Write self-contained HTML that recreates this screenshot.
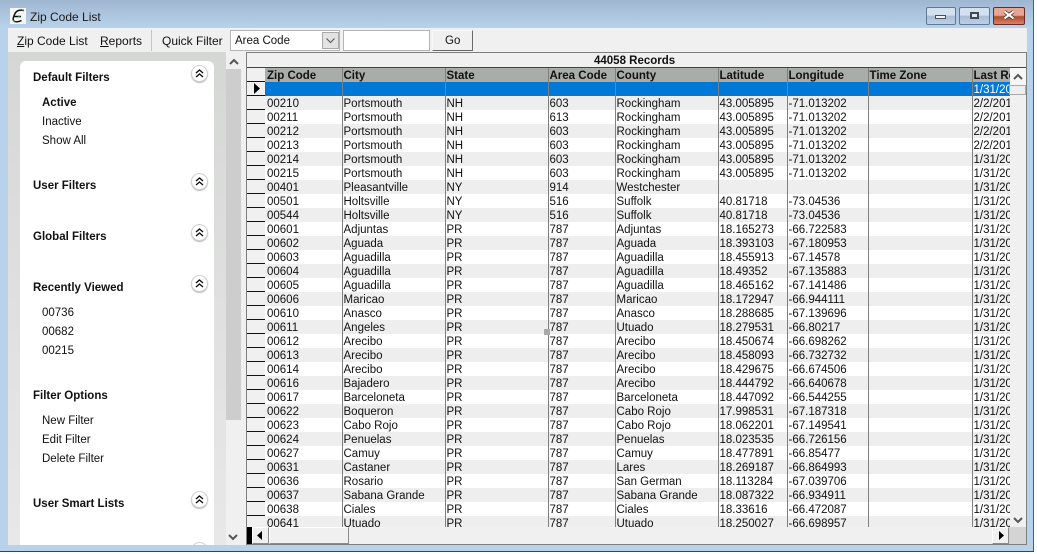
<!DOCTYPE html>
<html><head><meta charset="utf-8"><style>
html,body{margin:0;padding:0;background:#fff}
#w{position:relative;width:1037px;height:554px;overflow:hidden;background:#fff;font:11.5px "Liberation Sans",sans-serif;color:#111}
#w div,#w span.a,#w svg{position:absolute}
.t{white-space:nowrap;line-height:14px}
.b{font-weight:bold}
table{border-collapse:collapse;table-layout:fixed;position:absolute;left:265px;top:82px;width:745px}
td{height:14px;padding:2px 0 0 1px;border:0;border-right:1px solid #7f7f7f;white-space:nowrap;overflow:hidden;line-height:12px;font-size:11.5px;color:#111;box-sizing:border-box}
td:first-child,th:first-child{padding-left:2px}
tr{height:14px}
tr.s{background:#0078d7!important}
tr.s td{color:#fff}
td:last-child{border-right:0}
th{height:14px;padding:2px 0 0 1px;text-align:left;background:#a9adaa;border-right:1px solid #7f7f7f;font-size:11.5px;line-height:12px;white-space:nowrap;overflow:hidden;box-sizing:border-box;color:#111}
th:last-child{border-right:0}
.c{width:15px;height:15px;border-radius:50%;background:#fff;border:1px solid #d0d0d0;box-shadow:0 1px 1px #bbb}
.sl{left:247px;width:18px;height:1px;background:#111}
</style></head><body><div id="w">
<div style="left:0;top:0;width:1034px;height:552px;background:linear-gradient(#9fb6d1,#b9d2ec 28px,#b9d2ec);box-sizing:border-box"></div>
<div style="left:1033px;top:0;width:1px;height:552px;background:#4a5f72"></div>
<div style="left:0;top:551px;width:1034px;height:1px;background:#2b4a55"></div>

<svg style="left:10px;top:8px" width="16" height="16" viewBox="0 0 16 16"><rect width="16" height="16" fill="#f6f6f6"/><path d="M14 2.500C10 1.500 6.500 2.500 5 5.500S2.500 11 3.500 12.500 8 14.500 11.500 12.500M4 8.500h7" fill="none" stroke="#111" stroke-width="1.500"/><path d="M12 2l2 .5M3 12l2 2M8 8.500h2" stroke="#2f7a45" stroke-width="1.300"/></svg>
<div class="t" style="left:30px;top:10px;font-size:12px;color:#1a1a1a">Zip Code List</div>

<div style="left:926px;top:7px;width:30px;height:18px;border:1px solid #5f7a96;border-radius:2px;box-sizing:border-box;background:linear-gradient(#d3e0ef 45%,#a9bed6 50%,#bcd0e6)"></div>
<div style="left:935px;top:15px;width:11px;height:4px;background:#f4f4f4;border:1px solid #47505b;box-sizing:border-box"></div>
<div style="left:959px;top:7px;width:31px;height:18px;border:1px solid #5f7a96;border-radius:2px;box-sizing:border-box;background:linear-gradient(#d3e0ef 45%,#a9bed6 50%,#bcd0e6)"></div>
<div style="left:970px;top:12px;width:9px;height:7px;background:#dfe8f1;border:2px solid #3f4853;box-sizing:border-box"></div>
<div style="left:993px;top:7px;width:32px;height:18px;border:1px solid #6b2a2a;border-radius:2px;box-sizing:border-box;background:linear-gradient(#e8a595 45%,#a8502a 55%,#d9836c)"></div>
<svg style="left:1002px;top:10px" width="14" height="10" viewBox="0 0 14 10"><path d="M2.500 1.500l9 7M11.500 1.500l-9 7" stroke="#3a1d1d" stroke-width="3.600"/><path d="M2.500 1.500l9 7M11.500 1.500l-9 7" stroke="#fff" stroke-width="2.200"/></svg>

<div style="left:8px;top:28px;width:1019px;height:517px;background:#f0f0f0"></div>
<div class="t" style="left:17px;top:34px;font-size:12px"><u>Z</u>ip Code List</div>
<div class="t" style="left:100px;top:34px;font-size:12px"><u>R</u>eports</div>
<div style="left:151px;top:30px;width:1px;height:21px;background:#c4c4c4"></div>
<div class="t" style="left:162px;top:34px;font-size:12px">Quick Filter</div>
<div style="left:230px;top:30px;width:110px;height:21px;background:#fff;border:1px solid #b4b4b4;box-sizing:border-box"></div>
<div class="t" style="left:235px;top:34px;font-size:11.5px">Area Code</div>
<div style="left:322px;top:32px;width:17px;height:17px;background:#e3e3e3;border:1px solid #a8a8a8;box-sizing:border-box"></div>
<svg style="left:325px;top:37px" width="11" height="8" viewBox="0 0 11 8"><path d="M1.500 1.500l4 4 4-4" fill="none" stroke="#555" stroke-width="1.100"/></svg>
<div style="left:343px;top:30px;width:87px;height:21px;background:#fff;border:1px solid #b4b4b4;box-sizing:border-box"></div>
<div style="left:432px;top:30px;width:41px;height:21px;background:#f0f0f0;border:1px solid;border-color:#f8f8f8 #6a6a6a #6a6a6a #f8f8f8;box-sizing:border-box"></div>
<div class="t" style="left:445px;top:34px;font-size:11.5px">Go</div>

<div style="left:8px;top:52px;width:218px;height:493px;background:linear-gradient(#d5d7d5,#e8e8e8)"></div>
<div style="left:20px;top:61px;width:194px;height:484px;background:#fff;border-radius:6px 6px 0 0"></div>
<div style="left:226px;top:52px;width:20px;height:493px;background:#f0f0f0"></div>
<div style="left:226px;top:69px;width:15px;height:351px;background:#cdcdcd"></div>
<svg style="left:228px;top:58px" width="12" height="8" viewBox="0 0 12 8"><path d="M2 6l4-4 4 4" fill="none" stroke="#555" stroke-width="2"/></svg>
<svg style="left:227px;top:533px" width="12" height="8" viewBox="0 0 12 8"><path d="M2 2l4 4 4-4" fill="none" stroke="#555" stroke-width="2"/></svg>

<div class="t b" style="left:33px;top:71px">Default Filters</div>
<div class="t b" style="left:42px;top:96px">Active</div>
<div class="t" style="left:42px;top:115px">Inactive</div>
<div class="t" style="left:42px;top:134px">Show All</div>
<div class="t b" style="left:33px;top:179px">User Filters</div>
<div class="t b" style="left:33px;top:230px">Global Filters</div>
<div class="t b" style="left:33px;top:281px">Recently Viewed</div>
<div class="t" style="left:42px;top:306px">00736</div>
<div class="t" style="left:42px;top:325px">00682</div>
<div class="t" style="left:42px;top:344px">00215</div>
<div class="t b" style="left:33px;top:389px">Filter Options</div>
<div class="t" style="left:42px;top:414px">New Filter</div>
<div class="t" style="left:42px;top:433px">Edit Filter</div>
<div class="t" style="left:42px;top:452px">Delete Filter</div>
<div class="t b" style="left:33px;top:497px">User Smart Lists</div>

<div class="c" style="left:191px;top:65px"></div><svg style="left:192px;top:66px" width="15" height="15" viewBox="0 0 15 15"><path d="M4 7l3.500-3 3.500 3M4 11l3.500-3 3.500 3" fill="none" stroke="#111" stroke-width="1.400"/></svg>
<div class="c" style="left:191px;top:173px"></div><svg style="left:192px;top:174px" width="15" height="15" viewBox="0 0 15 15"><path d="M4 7l3.500-3 3.500 3M4 11l3.500-3 3.500 3" fill="none" stroke="#111" stroke-width="1.400"/></svg>
<div class="c" style="left:191px;top:224px"></div><svg style="left:192px;top:225px" width="15" height="15" viewBox="0 0 15 15"><path d="M4 7l3.500-3 3.500 3M4 11l3.500-3 3.500 3" fill="none" stroke="#111" stroke-width="1.400"/></svg>
<div class="c" style="left:191px;top:275px"></div><svg style="left:192px;top:276px" width="15" height="15" viewBox="0 0 15 15"><path d="M4 7l3.500-3 3.500 3M4 11l3.500-3 3.500 3" fill="none" stroke="#111" stroke-width="1.400"/></svg>
<div class="c" style="left:191px;top:491px"></div><svg style="left:192px;top:492px" width="15" height="15" viewBox="0 0 15 15"><path d="M4 7l3.500-3 3.500 3M4 11l3.500-3 3.500 3" fill="none" stroke="#111" stroke-width="1.400"/></svg>
<div style="left:185px;top:535px;width:29px;height:10px;overflow:hidden"><div class="c" style="left:6px;top:7px"></div></div>
<div style="left:0;top:545px;width:1027px;height:6px;background:#b9d2ec"></div>
<div style="left:0;top:52px;width:8px;height:499px;background:#b9d2ec"></div>

<div style="left:246px;top:52px;width:781px;height:493px;background:#f0f0f0;border:1px solid #7f7f7f;box-sizing:border-box"></div>
<div class="t b" style="left:594px;top:54px">44058 Records</div>
<div style="left:247px;top:67px;width:779px;height:1px;background:#444"></div>
<div style="left:247px;top:68px;width:18px;height:459px;background:#f0f0f0"></div>
<div class="sl" style="top:81px"></div>
<div class="sl" style="top:95px"></div>
<div class="sl" style="top:109px"></div>
<div class="sl" style="top:123px"></div>
<div class="sl" style="top:137px"></div>
<div class="sl" style="top:151px"></div>
<div class="sl" style="top:165px"></div>
<div class="sl" style="top:179px"></div>
<div class="sl" style="top:193px"></div>
<div class="sl" style="top:207px"></div>
<div class="sl" style="top:221px"></div>
<div class="sl" style="top:235px"></div>
<div class="sl" style="top:249px"></div>
<div class="sl" style="top:263px"></div>
<div class="sl" style="top:277px"></div>
<div class="sl" style="top:291px"></div>
<div class="sl" style="top:305px"></div>
<div class="sl" style="top:319px"></div>
<div class="sl" style="top:333px"></div>
<div class="sl" style="top:347px"></div>
<div class="sl" style="top:361px"></div>
<div class="sl" style="top:375px"></div>
<div class="sl" style="top:389px"></div>
<div class="sl" style="top:403px"></div>
<div class="sl" style="top:417px"></div>
<div class="sl" style="top:431px"></div>
<div class="sl" style="top:445px"></div>
<div class="sl" style="top:459px"></div>
<div class="sl" style="top:473px"></div>
<div class="sl" style="top:487px"></div>
<div class="sl" style="top:501px"></div>
<div class="sl" style="top:515px"></div>
<div style="left:265px;top:68px;width:1px;height:459px;background:#7f7f7f"></div>
<svg style="left:253px;top:82px" width="9" height="13" viewBox="0 0 9 13"><path d="M1 1l6 5.500-6 5.500z" fill="#000"/></svg>

<div style="left:265px;top:68px;width:745px;height:459px;overflow:hidden">
<table style="left:0;top:0">
<colgroup><col style="width:77px"><col style="width:103px"><col style="width:103px"><col style="width:67px"><col style="width:103px"><col style="width:69px"><col style="width:81px"><col style="width:104px"><col style="width:38px"></colgroup>
<tr style="background:#a9adaa"><th>Zip Code</th><th>City</th><th>State</th><th>Area Code</th><th>County</th><th>Latitude</th><th>Longitude</th><th>Time Zone</th><th>Last Re</th></tr>
<tr class="s"><td></td><td></td><td></td><td></td><td></td><td></td><td></td><td></td><td>1/31/2012</td></tr>
<tr style="background:#eee"><td>00210</td><td>Portsmouth</td><td>NH</td><td>603</td><td>Rockingham</td><td>43.005895</td><td>-71.013202</td><td></td><td>2/2/2012</td></tr>
<tr style="background:#fff"><td>00211</td><td>Portsmouth</td><td>NH</td><td>613</td><td>Rockingham</td><td>43.005895</td><td>-71.013202</td><td></td><td>2/2/2012</td></tr>
<tr style="background:#eee"><td>00212</td><td>Portsmouth</td><td>NH</td><td>603</td><td>Rockingham</td><td>43.005895</td><td>-71.013202</td><td></td><td>2/2/2012</td></tr>
<tr style="background:#fff"><td>00213</td><td>Portsmouth</td><td>NH</td><td>603</td><td>Rockingham</td><td>43.005895</td><td>-71.013202</td><td></td><td>2/2/2012</td></tr>
<tr style="background:#eee"><td>00214</td><td>Portsmouth</td><td>NH</td><td>603</td><td>Rockingham</td><td>43.005895</td><td>-71.013202</td><td></td><td>1/31/2012</td></tr>
<tr style="background:#fff"><td>00215</td><td>Portsmouth</td><td>NH</td><td>603</td><td>Rockingham</td><td>43.005895</td><td>-71.013202</td><td></td><td>1/31/2012</td></tr>
<tr style="background:#eee"><td>00401</td><td>Pleasantville</td><td>NY</td><td>914</td><td>Westchester</td><td></td><td></td><td></td><td>1/31/2012</td></tr>
<tr style="background:#fff"><td>00501</td><td>Holtsville</td><td>NY</td><td>516</td><td>Suffolk</td><td>40.81718</td><td>-73.04536</td><td></td><td>1/31/2012</td></tr>
<tr style="background:#eee"><td>00544</td><td>Holtsville</td><td>NY</td><td>516</td><td>Suffolk</td><td>40.81718</td><td>-73.04536</td><td></td><td>1/31/2012</td></tr>
<tr style="background:#fff"><td>00601</td><td>Adjuntas</td><td>PR</td><td>787</td><td>Adjuntas</td><td>18.165273</td><td>-66.722583</td><td></td><td>1/31/2012</td></tr>
<tr style="background:#eee"><td>00602</td><td>Aguada</td><td>PR</td><td>787</td><td>Aguada</td><td>18.393103</td><td>-67.180953</td><td></td><td>1/31/2012</td></tr>
<tr style="background:#fff"><td>00603</td><td>Aguadilla</td><td>PR</td><td>787</td><td>Aguadilla</td><td>18.455913</td><td>-67.14578</td><td></td><td>1/31/2012</td></tr>
<tr style="background:#eee"><td>00604</td><td>Aguadilla</td><td>PR</td><td>787</td><td>Aguadilla</td><td>18.49352</td><td>-67.135883</td><td></td><td>1/31/2012</td></tr>
<tr style="background:#fff"><td>00605</td><td>Aguadilla</td><td>PR</td><td>787</td><td>Aguadilla</td><td>18.465162</td><td>-67.141486</td><td></td><td>1/31/2012</td></tr>
<tr style="background:#eee"><td>00606</td><td>Maricao</td><td>PR</td><td>787</td><td>Maricao</td><td>18.172947</td><td>-66.944111</td><td></td><td>1/31/2012</td></tr>
<tr style="background:#fff"><td>00610</td><td>Anasco</td><td>PR</td><td>787</td><td>Anasco</td><td>18.288685</td><td>-67.139696</td><td></td><td>1/31/2012</td></tr>
<tr style="background:#eee"><td>00611</td><td>Angeles</td><td>PR</td><td>787</td><td>Utuado</td><td>18.279531</td><td>-66.80217</td><td></td><td>1/31/2012</td></tr>
<tr style="background:#fff"><td>00612</td><td>Arecibo</td><td>PR</td><td>787</td><td>Arecibo</td><td>18.450674</td><td>-66.698262</td><td></td><td>1/31/2012</td></tr>
<tr style="background:#eee"><td>00613</td><td>Arecibo</td><td>PR</td><td>787</td><td>Arecibo</td><td>18.458093</td><td>-66.732732</td><td></td><td>1/31/2012</td></tr>
<tr style="background:#fff"><td>00614</td><td>Arecibo</td><td>PR</td><td>787</td><td>Arecibo</td><td>18.429675</td><td>-66.674506</td><td></td><td>1/31/2012</td></tr>
<tr style="background:#eee"><td>00616</td><td>Bajadero</td><td>PR</td><td>787</td><td>Arecibo</td><td>18.444792</td><td>-66.640678</td><td></td><td>1/31/2012</td></tr>
<tr style="background:#fff"><td>00617</td><td>Barceloneta</td><td>PR</td><td>787</td><td>Barceloneta</td><td>18.447092</td><td>-66.544255</td><td></td><td>1/31/2012</td></tr>
<tr style="background:#eee"><td>00622</td><td>Boqueron</td><td>PR</td><td>787</td><td>Cabo Rojo</td><td>17.998531</td><td>-67.187318</td><td></td><td>1/31/2012</td></tr>
<tr style="background:#fff"><td>00623</td><td>Cabo Rojo</td><td>PR</td><td>787</td><td>Cabo Rojo</td><td>18.062201</td><td>-67.149541</td><td></td><td>1/31/2012</td></tr>
<tr style="background:#eee"><td>00624</td><td>Penuelas</td><td>PR</td><td>787</td><td>Penuelas</td><td>18.023535</td><td>-66.726156</td><td></td><td>1/31/2012</td></tr>
<tr style="background:#fff"><td>00627</td><td>Camuy</td><td>PR</td><td>787</td><td>Camuy</td><td>18.477891</td><td>-66.85477</td><td></td><td>1/31/2012</td></tr>
<tr style="background:#eee"><td>00631</td><td>Castaner</td><td>PR</td><td>787</td><td>Lares</td><td>18.269187</td><td>-66.864993</td><td></td><td>1/31/2012</td></tr>
<tr style="background:#fff"><td>00636</td><td>Rosario</td><td>PR</td><td>787</td><td>San German</td><td>18.113284</td><td>-67.039706</td><td></td><td>1/31/2012</td></tr>
<tr style="background:#eee"><td>00637</td><td>Sabana Grande</td><td>PR</td><td>787</td><td>Sabana Grande</td><td>18.087322</td><td>-66.934911</td><td></td><td>1/31/2012</td></tr>
<tr style="background:#fff"><td>00638</td><td>Ciales</td><td>PR</td><td>787</td><td>Ciales</td><td>18.33616</td><td>-66.472087</td><td></td><td>1/31/2012</td></tr>
<tr style="background:#eee"><td>00641</td><td>Utuado</td><td>PR</td><td>787</td><td>Utuado</td><td>18.250027</td><td>-66.698957</td><td></td><td>1/31/2012</td></tr>
</table>
</div>
<div style="left:544px;top:329px;width:6px;height:6px;background:#aaa"></div>

<div style="left:1010px;top:68px;width:16px;height:459px;background:#f0f0f0"></div>
<div style="left:1010px;top:68px;width:16px;height:17px;background:#f6f6f6"></div>
<div style="left:1009px;top:85px;width:17px;height:10px;background:#eee;border:1px solid #aaa;box-sizing:border-box"></div>
<svg style="left:1012px;top:73px" width="12" height="8" viewBox="0 0 12 8"><path d="M2 6l4-4 4 4" fill="none" stroke="#555" stroke-width="2"/></svg>
<svg style="left:1012px;top:516px" width="12" height="8" viewBox="0 0 12 8"><path d="M2 2l4 4 4-4" fill="none" stroke="#555" stroke-width="2"/></svg>

<div style="left:247px;top:527px;width:779px;height:17px;background:#f0f0f0"></div>
<div style="left:247px;top:527px;width:5px;height:17px;background:#000"></div>
<div style="left:252px;top:527px;width:17px;height:17px;background:#f0f0f0;border:1px solid;border-color:#fff #8a8a8a #8a8a8a #fff;box-sizing:border-box"></div>
<svg style="left:256px;top:531px" width="8" height="9" viewBox="0 0 8 9"><path d="M6 0v9L1 4.500z" fill="#000"/></svg>
<div style="left:269px;top:527px;width:80px;height:17px;background:#f0f0f0;border:1px solid;border-color:#fff #8a8a8a #8a8a8a #fff;box-sizing:border-box"></div>
<div style="left:992px;top:527px;width:17px;height:17px;background:#f0f0f0;border:1px solid;border-color:#fff #8a8a8a #8a8a8a #fff;box-sizing:border-box"></div>
<svg style="left:997px;top:531px" width="8" height="9" viewBox="0 0 8 9"><path d="M2 0v9l5-4.500z" fill="#000"/></svg>
<div style="left:1009px;top:527px;width:17px;height:17px;background:#d4d4d4"></div>
</div></body></html>
